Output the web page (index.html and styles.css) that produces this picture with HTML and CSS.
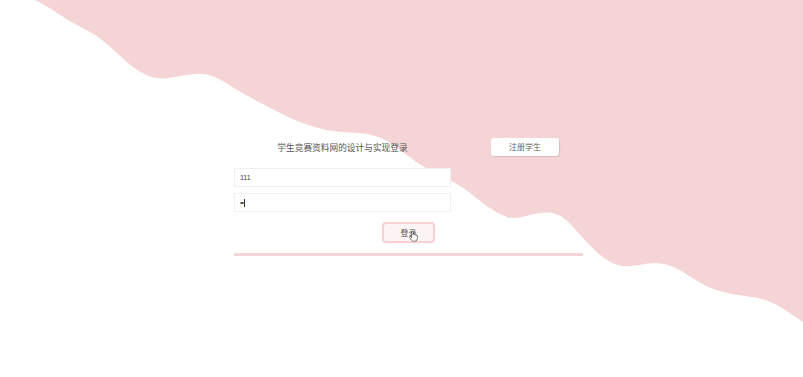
FILE: index.html
```html
<!DOCTYPE html>
<html lang="zh">
<head>
<meta charset="utf-8">
<title>学生竞赛资料网的设计与实现登录</title>
<link rel="stylesheet" href="styles.css">
</head>
<body>
<svg class="wave" viewBox="0 0 803 377" width="803" height="377" aria-hidden="true">
  <path fill="#f5d4d6" d="M35,0 L42.5,4 Q50,8 58.5,14 Q67,20 77,25 Q87,30 93.5,34 Q100,38 108.5,45.5 Q117,53 125,60.5 Q133,68 141.5,72.5 Q150,77 156.5,78 Q163,79 171.5,77.5 Q180,76 190,74.5 Q200,73 208.5,75 Q217,77 228.5,84.5 Q240,92 255,100 Q270,108 285,115.5 Q300,123 316.5,127.5 Q333,132 350,132.5 Q367,133 377,136.5 Q387,140 397,147.5 Q407,155 413.5,160 Q420,165 435,172.5 Q450,180 458.5,185 Q467,190 477,198.5 Q487,207 497,212.5 Q507,218 513.5,218 Q520,218 530,215 Q540,212 548.5,212.5 Q557,213 563.5,218 Q570,223 578.5,233 Q587,243 595,250.5 Q603,258 611.5,262.5 Q620,267 630,266 Q640,265 648,263.5 Q656,262 666,264.5 Q676,267 691,277 Q706,287 719.5,291 Q733,295 748,296.5 Q763,298 773,303 Q783,308 803,322 L803,0 Z"/>
</svg>
<main class="page">
  <div class="login">
    <div class="head">
      <div class="title">学生竞赛资料网的设计与实现登录</div>
      <button class="register">注册学生</button>
    </div>
    <div class="field"><span class="val">111</span></div>
    <div class="field"><span class="dots">••</span><span class="caret"></span></div>
    <div class="actions">
      <button class="submit">登录
        <svg class="hand" viewBox="0 0 10 13" width="9" height="12" aria-hidden="true">
          <path d="M3,6 L3,1.5 Q3,0.6 3.8,0.6 Q4.6,0.6 4.6,1.5 L4.6,5 L4.6,4.3 Q4.6,3.6 5.4,3.6 Q6.2,3.6 6.2,4.3 L6.2,5.2 Q6.2,4.6 7,4.6 Q7.8,4.6 7.8,5.4 L7.8,6 Q7.8,5.5 8.5,5.5 Q9.3,5.5 9.3,6.3 L9.3,9 Q9.3,12.3 6.3,12.3 L5,12.3 Q3.6,12.3 2.6,11 L0.8,8.4 Q0.3,7.6 1,7.2 Q1.6,6.9 2.2,7.5 L3,8.4 Z" fill="#fff" stroke="#333" stroke-width="0.7"/>
        </svg>
      </button>
    </div>
    <div class="rule"></div>
  </div>
</main>
</body>
</html>
```
FILE: styles.css
```css
html, body {
  margin: 0;
  padding: 0;
  background: #ffffff;
  width: 803px;
  height: 377px;
  overflow: hidden;
  font-family: "Noto Sans CJK SC", "Noto Sans", sans-serif;
}

.wave {
  position: absolute;
  left: 0;
  top: 0;
  z-index: 0;
}

.page {
  position: relative;
  z-index: 1;
  padding-top: 138px;
  padding-left: 234px;
}

.login {
  width: 349px;
  display: flex;
  flex-direction: column;
}

.head {
  display: flex;
  align-items: center;
  height: 18px;
}

.title {
  width: 217px;
  text-align: center;
  font-size: 8.7px;
  color: #555;
  line-height: 18px;
  padding-top: 1px;
}

.register {
  margin-left: 40px;
  width: 68px;
  height: 18px;
  padding: 0;
  border: none;
  border-radius: 3px;
  background: #ffffff;
  box-shadow: 1px 1px 1px rgba(150, 150, 150, 0.35);
  font-family: inherit;
  font-size: 8px;
  color: #666;
  line-height: 18px;
}

.field {
  margin-top: 6px;
  width: 217px;
  height: 19px;
  box-sizing: border-box;
  border: 1px solid #f0f0f0;
  background: #ffffff;
  display: flex;
  align-items: center;
  padding-left: 5px;
}

.head + .field {
  margin-top: 12px;
}

.val {
  font-family: "Liberation Sans", sans-serif;
  font-size: 7px;
  color: #444;
}

.dots {
  font-family: "Liberation Sans", sans-serif;
  font-size: 7px;
  color: #444;
  letter-spacing: -1px;
}

.caret {
  display: inline-block;
  width: 1px;
  height: 8px;
  margin-left: 1px;
  background: #333;
}

.actions {
  margin-top: 10px;
  display: flex;
  justify-content: center;
}

.submit {
  position: relative;
  width: 53px;
  height: 21px;
  padding: 0;
  box-sizing: border-box;
  border: 2px solid #f6d0d4;
  border-radius: 4px;
  background: #fdf4f4;
  font-family: inherit;
  font-size: 8px;
  color: #555;
  line-height: 16px;
}

.hand {
  position: absolute;
  left: 25px;
  top: 6px;
}

.rule {
  margin-top: 10px;
  width: 349px;
  height: 3px;
  background: #f5d4d6;
}
```
